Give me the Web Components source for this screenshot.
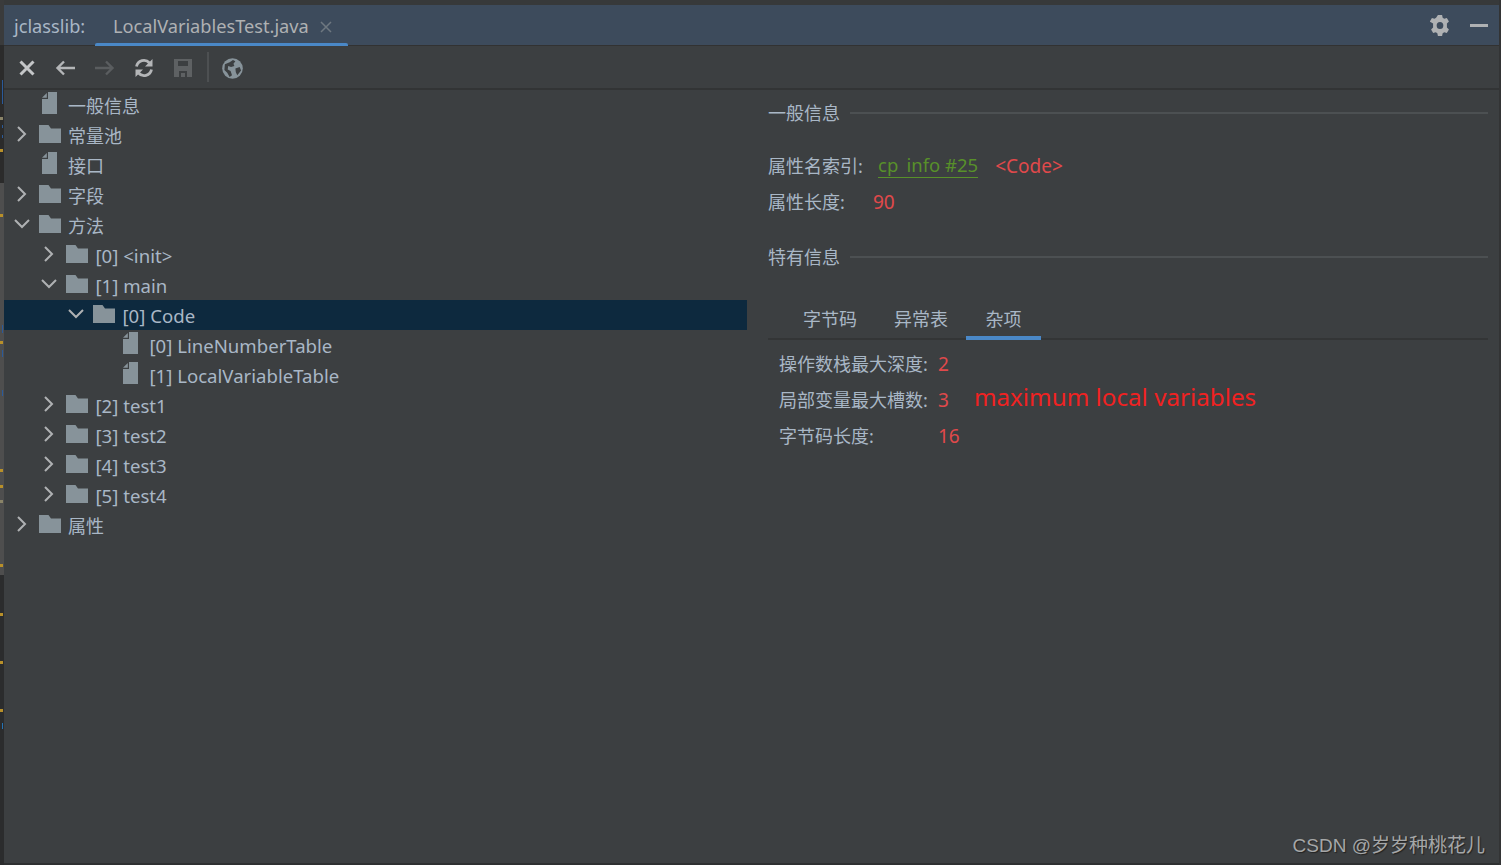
<!DOCTYPE html>
<html lang="zh">
<head>
<meta charset="utf-8">
<title>jclasslib</title>
<style>
  html, body { margin: 0; height: 100%; background: #3c3f41; overflow: hidden; }
  body { font: 18px "Noto Sans", "Noto Sans CJK SC", sans-serif; color: #a9b7c6; }
</style>
</head>
<body>

<jc-window>
  <jc-tabbar slot="tabs"></jc-tabbar>
  <jc-toolbar slot="tools"></jc-toolbar>
  <jc-tree slot="tree">
    <jc-row level="0" icon="file" label="一般信息"></jc-row>
    <jc-row level="0" icon="folder" arrow="right" label="常量池"></jc-row>
    <jc-row level="0" icon="file" label="接口"></jc-row>
    <jc-row level="0" icon="folder" arrow="right" label="字段"></jc-row>
    <jc-row level="0" icon="folder" arrow="down" label="方法"></jc-row>
    <jc-row level="1" icon="folder" arrow="right" label="[0] &lt;init&gt;"></jc-row>
    <jc-row level="1" icon="folder" arrow="down" label="[1] main"></jc-row>
    <jc-row level="2" icon="folder" arrow="down" label="[0] Code" selected></jc-row>
    <jc-row level="3" icon="file" label="[0] LineNumberTable"></jc-row>
    <jc-row level="3" icon="file" label="[1] LocalVariableTable"></jc-row>
    <jc-row level="1" icon="folder" arrow="right" label="[2] test1"></jc-row>
    <jc-row level="1" icon="folder" arrow="right" label="[3] test2"></jc-row>
    <jc-row level="1" icon="folder" arrow="right" label="[4] test3"></jc-row>
    <jc-row level="1" icon="folder" arrow="right" label="[5] test4"></jc-row>
    <jc-row level="0" icon="folder" arrow="right" label="属性"></jc-row>
  </jc-tree>
  <jc-detail slot="detail"></jc-detail>
</jc-window>

<script>
//small helper, every element just sets its shadow markup once
class Base extends HTMLElement {
  render(html) {
    this.attachShadow({ mode: 'open' });
    this.shadowRoot.innerHTML = html;
  }
}

//gutter marks: [color, x, y, w, h]
const MARKS = [
  ['#8a8468', 0, 117, 3, 3], ['#b8902a', 0, 149, 3, 3], ['#b8902a', 0, 214, 3, 3],
  ['#2a5a9a', 2, 80, 1, 24], ['#2a5a9a', 2, 125, 1, 3], ['#2a5a9a', 2, 135, 1, 3],
  ['#2a5a9a', 2, 325, 1, 8], ['#b8902a', 0, 341, 3, 3], ['#2a5a9a', 2, 350, 1, 7],
  ['#2a5a9a', 2, 390, 1, 6], ['#b8902a', 0, 469, 3, 3], ['#b8902a', 0, 485, 3, 3],
  ['#8a8468', 0, 500, 3, 3], ['#b8902a', 0, 564, 3, 3], ['#b8902a', 0, 613, 3, 3],
  ['#b8902a', 0, 661, 3, 3], ['#b8902a', 0, 709, 3, 3], ['#2473b5', 2, 723, 1, 6]
];

//WINDOW =========================================================================
class JcWindow extends Base {
  constructor() {
    super();
    const marks = MARKS.map(([c, x, y, w, h]) =>
      `linear-gradient(${c}, ${c}) ${x}px ${y}px / ${w}px ${h}px no-repeat`).join(',');
    this.render(`
      <style>
        :host { display: flex; height: 865px; width: 1501px; position: relative; }
        .gutter {
          width: 4px; flex: none;
          background: ${marks}, linear-gradient(#3a3b3c 0 45px, #2b2b2b 45px 183px, #4e4e4e 183px 575px, #2b2c2d 575px);
        }
        .main { flex: 1; display: flex; flex-direction: column; min-width: 0; border-right: 2px solid #333435; }
        .top { height: 5px; background: #37393a; flex: none; }
        .split { flex: 1; display: flex; min-height: 0; }
        .left { width: 743px; flex: none; }
        .right { flex: 1; min-width: 0; padding-left: 21px; }
        .edge { height: 2px; background: #2e3031; flex: none; }
      </style>
      <div class="gutter"></div>
      <div class="main">
        <div class="top"></div>
        <slot name="tabs"></slot>
        <slot name="tools"></slot>
        <div class="split">
          <div class="left"><slot name="tree"></slot></div>
          <div class="right"><slot name="detail"></slot></div>
        </div>
        <div class="edge"></div>
      </div>
      <jc-watermark></jc-watermark>
    `);
  }
}

//TAB BAR =========================================================================
class JcTabbar extends Base {
  constructor() {
    super();
    this.render(`
      <style>
        :host { display: flex; align-items: stretch; height: 40px; background: #3d4b5c; border-bottom: 1px solid #323232; font-size: 18.2px; }
        .name { padding: 0 9px 0 10px; line-height: 43px; color: #a9b7c6; width: 72px; white-space: nowrap; }
        .tab { position: relative; width: 253px; box-sizing: border-box; padding-left: 18px; line-height: 43px; color: #afb1b3; display: flex; align-items: flex-start; white-space: nowrap; }
        .tab::after { content: ""; position: absolute; left: 0; right: 0; bottom: -1px; height: 3px; background: #4a88c7; border-radius: 2px 2px 0 0; }
        .close { margin-left: 11px; margin-top: 16px; }
        .spacer { flex: 1; }
        .tools { display: flex; align-items: center; gap: 20px; padding: 0 11px 0 0; margin-top: 1px; }
      </style>
      <div class="name">jclasslib:</div>
      <div class="tab"><span>LocalVariablesTest.java</span>
        <svg class="close" width="12" height="12" viewBox="0 0 12 12"><path d="M1 1L11 11M11 1L1 11" stroke="#6f7880" stroke-width="1.5"/></svg>
      </div>
      <div class="spacer"></div>
      <div class="tools">
        <svg width="20" height="21" viewBox="0 0 24 24" preserveAspectRatio="none"><path fill="#afb1b3" fill-rule="evenodd" d="M9.500 0h5l.7 3.2 1.900 1.100 3.100-1 2.500 4.200-2.400 2.200v4.600l2.400 2.200-2.500 4.200-3.100-1-1.900 1.100-.7 3.200h-5l-.7-3.200-1.900-1.100-3.100 1-2.500-4.200 2.400-2.200V9.700L-.2 7.500 2.300 3.300l3.100 1 1.900-1.100ZM12 8a4 4 0 1 0 0 8 4 4 0 0 0 0-8Z"/></svg>
        <svg width="18" height="3" viewBox="0 0 18 3"><rect width="18" height="3" fill="#afb1b3"/></svg>
      </div>
    `);
  }
}

//TOOLBAR =========================================================================
class JcToolbar extends Base {
  constructor() {
    super();
    this.render(`
      <style>
        :host { display: flex; align-items: center; height: 40px; padding-top: 2px; border-bottom: 2px solid #323435; padding-left: 13px; }
        svg { display: block; flex: none; }
        .sep { width: 2px; height: 30px; background: #4d5052; margin: -2px 0 0 14px; }
      </style>
      <svg width="20" height="20" viewBox="0 0 20 20"><path d="M3.500 3.500L16.500 16.500M16.500 3.500L3.500 16.500" stroke="#c4c6c8" stroke-width="3"/></svg>
      <svg style="margin-left:18px" width="20" height="20" viewBox="0 0 20 20"><path d="M20 10H2.500M9 3.500L2.500 10L9 16.500" fill="none" stroke="#b4b6b8" stroke-width="2.400"/></svg>
      <svg style="margin-left:20px" width="20" height="20" viewBox="0 0 20 20"><path d="M0 10H17.500M11 3.500L17.500 10L11 16.500" fill="none" stroke="#5a5d5f" stroke-width="2.400"/></svg>
      <svg style="margin-left:19px" width="20" height="20" viewBox="0 0 20 20"><path d="M2.500 8.500A7.500 7.500 0 0 1 15.500 5M17.500 11.500A7.500 7.500 0 0 1 4.500 15" fill="none" stroke="#b4b6b8" stroke-width="2.800"/><path d="M18.500 1V8.500H11ZM1.500 19V11.500H9Z" fill="#b4b6b8"/></svg>
      <svg style="margin-left:19px" width="20" height="20" viewBox="0 0 20 20"><path fill="#5e6163" fill-rule="evenodd" d="M1 1H19V19H1ZM5 3V8H15V3ZM6 13V19H14V13Z"/><rect x="8" y="15" width="4" height="4" fill="#5e6163"/></svg>
      <div class="sep"></div>
      <svg style="margin-left:13px" width="21" height="21" viewBox="0 0 22 22"><circle cx="11" cy="11" r="10.800" fill="#87939a"/><path d="M3 6.500L8 4.500L11.500 2L14 3.500L12 6L13 8.500L9.500 9.500L6.500 8.500L6 12L9 13.500L10.500 18L8 20L5.500 15.500L2.500 12.500ZM14 11L18.500 9.500L20 13L16 18L14.500 15Z" fill="#3c3f41"/></svg>
    `);
  }
}

//TREE =========================================================================
class JcTree extends Base {
  constructor() {
    super();
    this.render(`
      <style>:host { display: block; }</style>
      <slot></slot>
    `);
  }
}

const ICONS = {
  file: `<svg width="15" height="22" viewBox="0 0 15 22" style="margin-left:3px"><path d="M6 0H15V22H0V7H6Z" fill="#87939a"/><path d="M4.800 1V5.800H0Z" fill="#87939a"/></svg>`,
  folder: `<svg width="22" height="18" viewBox="0 0 22 18" style="margin-top:1px"><path d="M0 0H9.500L12 3.500H22V18H0Z" fill="#87939a"/></svg>`
};
const ARROWS = {
  right: 'M2 2L9 9L2 16',
  down: 'M-1 5L6 12L13 5'
};

class JcRow extends Base {
  constructor() {
    super();
    const level = +this.getAttribute('level');
    const arrow = this.getAttribute('arrow');
    const icon = this.getAttribute('icon');
    const label = this.getAttribute('label');
    const pad = 12 + level * 27;
    const arrowSvg = arrow
      ? `<svg class="arrow" width="16" height="18" viewBox="0 0 16 18" overflow="visible"><path d="${ARROWS[arrow]}" fill="none" stroke="#afb1b3" stroke-width="2"/></svg>`
      : `<span class="arrow"></span>`;
    // latin labels look a touch wider than the cjk ones in the reference
    const latin = /^\[/.test(label);
    this.render(`
      <style>
        :host { display: flex; align-items: center; height: 30px; white-space: nowrap; color: #a9b7c6; padding-left: ${pad}px; }
        :host([selected]) { background: #0d293e; }
        .arrow { width: 16px; height: 18px; flex: none; margin-right: 6px; margin-top: -2px; }
        .icon { width: 22px; flex: none; display: flex; margin-top: -4px; margin-left: 1px; }
        .label { margin-left: 7px; ${latin ? 'font-size: 18.600px; padding-left: .5px;' : ''} }
      </style>
      ${arrowSvg}
      <span class="icon">${ICONS[icon]}</span>
      <span class="label"></span>
    `);
    this.shadowRoot.querySelector('.label').textContent = label;
  }
}

//DETAIL PANE =========================================================================
class JcSection extends Base {
  constructor() {
    super();
    this.render(`
      <style>
        :host { display: flex; align-items: center; gap: 10px; white-space: nowrap; color: #a9b7c6; height: 30px; padding-right: 11px; }
        .line { flex: 1; height: 2px; background: #4c5052; margin-top: 2px; }
      </style>
      <span><slot></slot></span><div class="line"></div>
    `);
  }
}

class JcTabs extends Base {
  constructor() {
    super();
    this.render(`
      <style>
        :host { display: flex; height: 41px; border-bottom: 2px solid #333536; margin-right: 11px; color: #a9b7c6; white-space: nowrap; }
        .t { display: block; box-sizing: border-box; padding: 7px 0 0; text-align: center; line-height: 30px; position: relative; height: 41px; }
        .first { width: 99px; padding-left: 25px; }
        .second { width: 99px; padding-left: 9px; }
        .on { width: 75px; }
        .on::after { content: ""; position: absolute; left: 0; right: 0; bottom: -2px; height: 4px; background: #4a88c7; }
      </style>
      <span class="t first">字节码</span>
      <span class="t second">异常表</span>
      <span class="t on">杂项</span>
    `);
  }
}

class JcDetail extends Base {
  constructor() {
    super();
    this.render(`
      <style>
        :host { display: block; color: #a9b7c6; white-space: nowrap; padding-top: 7px; }
        .attrs { display: grid; grid-template-columns: 105px auto; justify-content: start; margin-top: 24px; row-gap: 6px; }
        .attrs > * { line-height: 30px; }
        .val { display: flex; }
        .link { color: #58902a; border-bottom: 1.500px solid #58902a; font-size: 18.500px; line-height: 22px; height: 23px; margin: 3px 17px 0 5px; }
        .link i { font-style: normal; color: transparent; }
        .red { color: #e0494b; font-size: 19px; }
        .gap { margin-top: 24px; }
        .misc { display: grid; grid-template-columns: 159px auto; justify-content: start; padding-left: 11px; margin-top: 9px; row-gap: 6px; }
        .misc > * { line-height: 30px; }
        .note { color: #f02222; font-size: 24.200px; line-height: 30px; margin-left: 25px; margin-top: -3px; }
        .v3 { display: flex; }
      </style>
      <jc-section>一般信息</jc-section>
      <div class="attrs">
        <span>属性名索引:</span>
        <span class="val"><span class="link">cp<i>_</i>info #25</span><span class="red">&lt;Code&gt;</span></span>
        <span>属性长度:</span>
        <span class="red">90</span>
      </div>
      <jc-section class="gap">特有信息</jc-section>
      <jc-tabs style="margin-top:26px"></jc-tabs>
      <div class="misc">
        <span>操作数栈最大深度:</span><span class="red">2</span>
        <span>局部变量最大槽数:</span><span class="v3"><span class="red">3</span><span class="note">maximum local variables</span></span>
        <span>字节码长度:</span><span class="red">16</span>
      </div>
    `);
  }
}

class JcWatermark extends Base {
  constructor() {
    super();
    this.render(`
      <style>
        :host { position: absolute; right: 16px; bottom: 6px; font-size: 19px; line-height: 26px; color: #a5a7a8; text-shadow: 1px 1px 1px #222; white-space: nowrap; font-family: "Liberation Sans", "Noto Sans CJK SC", sans-serif; }
      </style>
      CSDN @岁岁种桃花儿
    `);
  }
}

//=========================================================================
customElements.define('jc-section', JcSection);
customElements.define('jc-tabs', JcTabs);
customElements.define('jc-watermark', JcWatermark);
customElements.define('jc-detail', JcDetail);
customElements.define('jc-row', JcRow);
customElements.define('jc-tree', JcTree);
customElements.define('jc-toolbar', JcToolbar);
customElements.define('jc-tabbar', JcTabbar);
customElements.define('jc-window', JcWindow);
</script>
</body>
</html>
